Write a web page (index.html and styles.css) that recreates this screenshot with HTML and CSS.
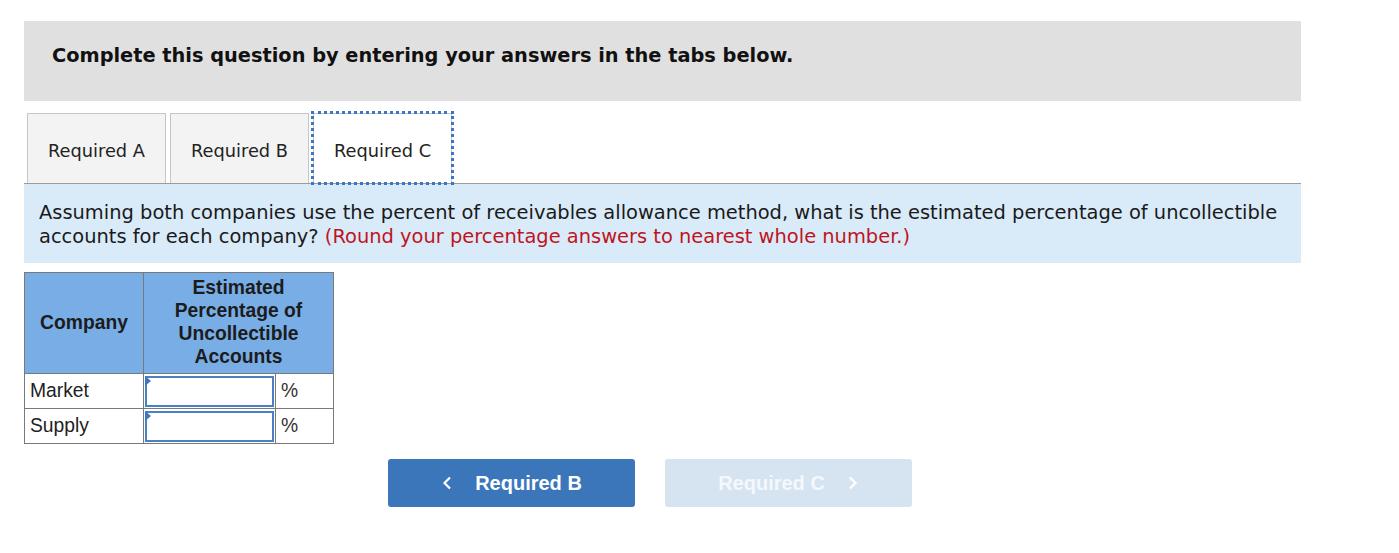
FILE: index.html
```html
<!DOCTYPE html>
<html>
<head>
  <title>Required C</title>
  <link rel="stylesheet" href="styles.css">
</head>
<body>
    <div class="container">
        <div class="instructions">Complete this question by entering your answers in the tabs below.</div>
        <div class="tabs">
            <button class="tab">Required A</button>
            <button class="tab">Required B</button>
            <button class="tab active">Required C</button>
        </div>
        <div class="question">
            Assuming both companies use the percent of receivables allowance method, what is the estimated percentage of uncollectible accounts for each company? <span class="hint">(Round your percentage answers to nearest whole number.)</span>
        </div>
        <table class="answers">
            <colgroup>
                <col class="col-name">
                <col class="col-entry">
                <col class="col-unit">
            </colgroup>
            <tr>
                <th>Company</th>
                <th colspan="2">Estimated<br>Percentage of<br>Uncollectible<br>Accounts</th>
            </tr>
            <tr>
                <td class="name">Market</td>
                <td class="entry"><span class="box"></span></td>
                <td class="unit">%</td>
            </tr>
            <tr>
                <td class="name">Supply</td>
                <td class="entry"><span class="box"></span></td>
                <td class="unit">%</td>
            </tr>
        </table>
        <div class="nav">
            <button class="nav-btn">
                <svg width="12" height="18" viewBox="0 0 12 18"><path d="M9 3.5 L3.5 9 L9 14.5" fill="none" stroke="#fff" stroke-width="2.2"/></svg>
                <span>Required B</span>
            </button>
            <button class="nav-btn disabled">
                <span>Required C</span>
                <svg width="12" height="18" viewBox="0 0 12 18"><path d="M3 3.5 L8.5 9 L3 14.5" fill="none" stroke="#fff" stroke-width="2.2"/></svg>
            </button>
        </div>
    </div>
</body>
</html>
```

FILE: styles.css
```css
/* Page */
body {
    margin: 0;
    background-color: #fff;
    color: #222;
    font-family: 'DejaVu Sans', Verdana, sans-serif;
}

.container {
    width: 1277px;
    padding: 21px 24px;
}

/* Grey instructions bar */
.instructions {
    box-sizing: border-box;
    background-color: #e0e0e0;
    height: 80px;
    display: flex;
    align-items: center;
    padding: 0 0 12px 28px;
    font-size: 19.35px;
    font-weight: bold;
    color: #111;
}

/* Tabs */
.tabs {
    display: flex;
    gap: 4px;
    margin-top: 12px;
    padding-left: 3px;
    border-bottom: 1px solid #9c9c9c;
}

.tab {
    width: 139px;
    height: 70px;
    padding: 4px 0 0;
    font-family: 'DejaVu Sans', Verdana, sans-serif;
    font-size: 17.8px;
    color: #222;
    background-color: #f3f3f3;
    border: 1px solid #c6c6c6;
    border-bottom: none;
    cursor: pointer;
}

.tab.active {
    background-color: #fff;
    outline: 3px dotted #3b76c4;
    outline-offset: -1px;
}

/* Question text */
.question {
    background-color: #d9ebf9;
    padding: 17px 8px 14px 15px;
    font-size: 19.45px;
    line-height: 24px;
    color: #1a1a1a;
}

.hint {
    color: #c0141d;
}

/* Answer table */
.answers {
    margin-top: 9px;
    border-collapse: collapse;
    table-layout: fixed;
    width: 309px;
    font-family: 'Liberation Sans', Arial, sans-serif;
    font-size: 19.3px;
}

.col-name { width: 119px; }
.col-entry { width: 132px; }
.col-unit { width: 58px; }

.answers th {
    background-color: #78ade6;
    border: 1px solid #7a7a7a;
    font-weight: bold;
    color: #1c1c1c;
    line-height: 23px;
    padding: 3px 0 5px;
}

.answers td {
    border: 1px solid #7a7a7a;
    height: 32px;
    padding: 0;
}

.answers td.name {
    padding-left: 5px;
    color: #222;
}

.answers td.entry {
    padding: 1px;
}

.box {
    position: relative;
    display: block;
    height: 27px;
    border: 2px solid #4a80c4;
    background-color: #fff;
}

.box:before {
    content: "";
    position: absolute;
    top: -2px;
    left: -2px;
    border-top: 5px solid transparent;
    border-bottom: 5px solid transparent;
    border-left: 6px solid #3b76c4;
}

.answers td.unit {
    padding-left: 5px;
    color: #333;
}

/* Navigation buttons */
.nav {
    display: flex;
    gap: 30px;
    margin-top: 15px;
    padding-left: 364px;
}

.nav-btn {
    width: 247px;
    height: 48px;
    display: flex;
    align-items: center;
    justify-content: center;
    gap: 22px;
    background-color: #3b76bb;
    color: #fff;
    border: none;
    border-radius: 3px;
    font-family: 'Liberation Sans', Arial, sans-serif;
    font-size: 20px;
    font-weight: bold;
    cursor: pointer;
}

.nav-btn.disabled {
    background-color: #d6e3f1;
    color: #f4f8fc;
    cursor: default;
}
```
